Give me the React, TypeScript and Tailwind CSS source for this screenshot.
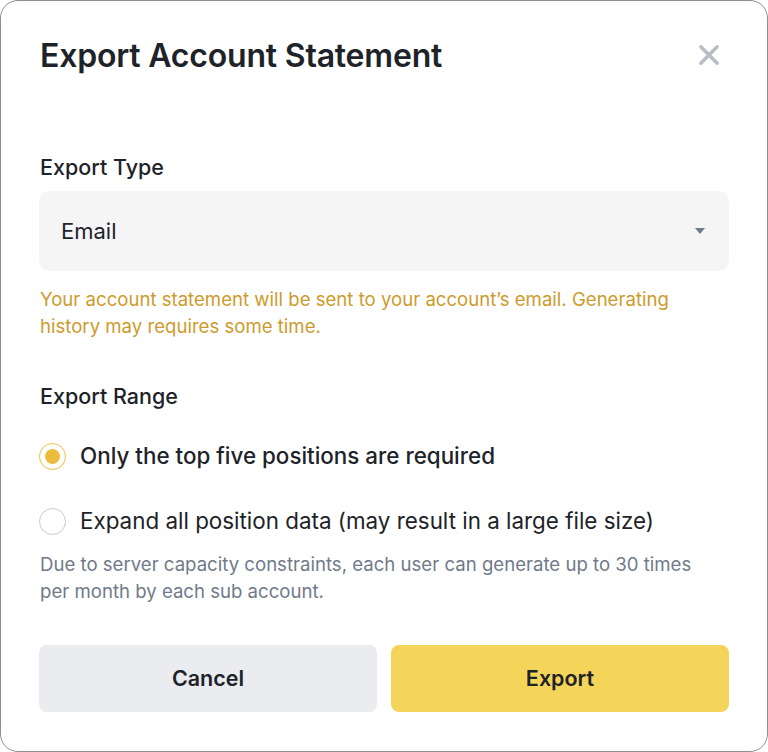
import { useState } from 'react'

export default function App() {
  const [range, setRange] = useState<'top' | 'all'>('top')

  return (
    <div className="w-[768px] h-[752px] bg-white" style={{ fontFamily: 'Inter, "Noto Sans", sans-serif' }}>
      <div className="h-full rounded-[18px] border border-[#8f8f8f] bg-white flex flex-col px-[38px]">
        {/* header */}
        <div className="flex items-center justify-between h-[110px]">
          <h1 className="text-[32px] font-semibold text-[#1e2329] tracking-[-0.2px] pl-[1px]">Export Account Statement</h1>
          <button className="text-[#b7bdc6] mr-[6px] -mt-[2px]">
            <svg width="28" height="28" viewBox="0 0 24 24" fill="none">
              <path d="M5 5l14 14M19 5L5 19" stroke="currentColor" strokeWidth="3" strokeLinecap="round" />
            </svg>
          </button>
        </div>

        {/* export type */}
        <div className="mt-[41px] pl-[1px] text-[21.5px] font-medium text-[#1e2329] leading-[30px]">Export Type</div>
        <div className="mt-[9px] h-[80px] rounded-[10px] bg-[#f5f5f5] flex items-center justify-between pl-[22px] pr-[24px]">
          <span className="text-[22px] text-[#1e2329]">Email</span>
          <svg width="10" height="7" viewBox="0 0 10 7">
            <path d="M0 0h10L5 6z" fill="#707a8a" />
          </svg>
        </div>
        <p className="mt-[15px] pl-[1px] text-[18.6px] leading-[27px] text-[#cd9b2c]">
          Your account statement will be sent to your account’s email. Generating history may requires some time.
        </p>

        {/* export range */}
        <div className="mt-[41px] pl-[1px] text-[21.5px] font-medium text-[#1e2329] leading-[30px]">Export Range</div>

        <div className="mt-[30px] flex flex-col gap-[35px]">
          <label className="flex items-center gap-[14px] cursor-pointer leading-[30px]" onClick={() => setRange('top')}>
            <span
              className={
                range === 'top'
                  ? 'w-[27px] h-[27px] rounded-full border-[1.5px] border-[#ecbd3c] flex items-center justify-center'
                  : 'w-[27px] h-[27px] rounded-full border-[1.5px] border-[#c5c9cf]'
              }
            >
              {range === 'top' && <span className="w-[15px] h-[15px] rounded-full bg-[#ecbd3c]" />}
            </span>
            <span className={range === 'top' ? 'text-[22.4px] font-medium text-[#1e2329]' : 'text-[22.4px] text-[#1e2329]'}>
              Only the top five positions are required
            </span>
          </label>
          <label className="flex items-center gap-[14px] cursor-pointer leading-[30px]" onClick={() => setRange('all')}>
            <span
              className={
                range === 'all'
                  ? 'w-[27px] h-[27px] rounded-full border-[1.5px] border-[#ecbd3c] flex items-center justify-center'
                  : 'w-[27px] h-[27px] rounded-full border-[1.5px] border-[#c5c9cf]'
              }
            >
              {range === 'all' && <span className="w-[15px] h-[15px] rounded-full bg-[#ecbd3c]" />}
            </span>
            <span className={range === 'all' ? 'text-[22.4px] font-medium text-[#1e2329]' : 'text-[22.4px] text-[#1e2329]'}>
              Expand all position data (may result in a large file size)
            </span>
          </label>
        </div>

        <p className="mt-[15px] pl-[1px] pr-[24px] text-[18.6px] leading-[27px] text-[#707a8a]">
          Due to server capacity constraints, each user can generate up to 30 times per month by each sub account.
        </p>

        {/* actions */}
        <div className="mt-[40px] grid grid-cols-2 gap-[14px]">
          <button className="h-[67px] rounded-[8px] bg-[#eaecef] text-[21.5px] font-semibold text-[#1e2329]">Cancel</button>
          <button className="h-[67px] rounded-[8px] bg-[#f5d45a] text-[21.5px] font-semibold text-[#1e2329]">Export</button>
        </div>
      </div>
    </div>
  )
}
